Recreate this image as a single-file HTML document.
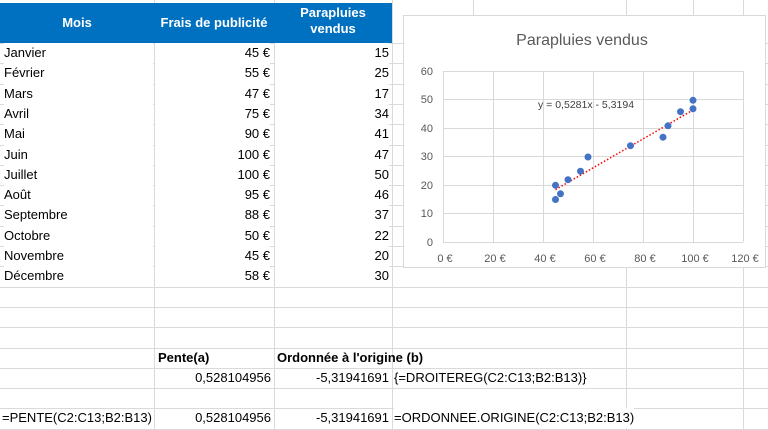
<!DOCTYPE html>
<html><head><meta charset="utf-8"><style>
body{margin:0;width:768px;height:429px;overflow:hidden;background:#fff;font-family:"Liberation Sans",sans-serif;font-size:13px;color:#000;position:relative}
.h{position:absolute;left:0;width:768px;height:1px;background:#dadada}
.v{position:absolute;top:0;width:1px;height:429px;background:#dadada}
.t{position:absolute;white-space:nowrap;line-height:20px}
.r{text-align:right}
.hd{position:absolute;left:0;top:3px;width:392px;height:40px;background:#0070c0}
.ht{position:absolute;color:#fff;font-weight:bold;text-align:center;line-height:16px}
</style></head><body>
<div id="g"></div>
<div class="hd"></div>
<div class="ht" style="left:0;width:154px;top:15px">Mois</div>
<div class="ht" style="left:154px;width:120px;top:15px">Frais de publicité</div>
<div class="ht" style="left:274px;width:118px;top:5px">Parapluies<br>vendus</div>
<div id="c"></div>
<svg style="position:absolute;left:0;top:0" width="768" height="429">
<rect x="403.5" y="15.5" width="362" height="252" fill="#fff" stroke="#d9d9d9"/>
<text x="582" y="45" font-family="Liberation Sans" font-size="16" fill="#595959" text-anchor="middle">Parapluies vendus</text>
<g stroke="#d9d9d9" stroke-width="1">
<line x1="443" y1="71.5" x2="743" y2="71.5"/><line x1="443" y1="99.5" x2="743" y2="99.5"/><line x1="443" y1="128.5" x2="743" y2="128.5"/><line x1="443" y1="156.5" x2="743" y2="156.5"/><line x1="443" y1="185.5" x2="743" y2="185.5"/><line x1="443" y1="213.5" x2="743" y2="213.5"/><line x1="443" y1="242.5" x2="743" y2="242.5"/>
<line x1="443.5" y1="71" x2="443.5" y2="242"/><line x1="493.5" y1="71" x2="493.5" y2="242"/><line x1="543.5" y1="71" x2="543.5" y2="242"/><line x1="593.5" y1="71" x2="593.5" y2="242"/><line x1="643.5" y1="71" x2="643.5" y2="242"/><line x1="693.5" y1="71" x2="693.5" y2="242"/><line x1="743.5" y1="71" x2="743.5" y2="242"/>
</g>
<g font-family="Liberation Sans" font-size="11" fill="#595959" text-anchor="end">
<text x="433" y="75">60</text><text x="433" y="103">50</text><text x="433" y="132">40</text><text x="433" y="160">30</text><text x="433" y="189">20</text><text x="433" y="217">10</text><text x="433" y="246">0</text>
</g>
<g font-family="Liberation Sans" font-size="11" fill="#595959" text-anchor="middle">
<text x="445" y="262">0 €</text><text x="495" y="262">20 €</text><text x="545" y="262">40 €</text><text x="595" y="262">60 €</text><text x="645" y="262">80 €</text><text x="695" y="262">100 €</text><text x="745" y="262">120 €</text>
</g>
<text x="538" y="108" font-family="Liberation Sans" font-size="10.5" fill="#404040">y = 0,5281x - 5,3194</text>
<line x1="555.5" y1="189.6" x2="693" y2="110" stroke="#ff0000" stroke-width="1.5" stroke-dasharray="1.5,2"/>
<g fill="#4472c4">
<circle cx="555.5" cy="199.5" r="3.5"/><circle cx="580.5" cy="171.2" r="3.5"/><circle cx="560.5" cy="193.8" r="3.5"/><circle cx="630.5" cy="145.7" r="3.5"/><circle cx="668" cy="125.8" r="3.5"/><circle cx="693" cy="108.8" r="3.5"/><circle cx="693" cy="100.3" r="3.5"/><circle cx="680.5" cy="111.7" r="3.5"/><circle cx="663" cy="137.2" r="3.5"/><circle cx="568" cy="179.7" r="3.5"/><circle cx="555.5" cy="185.3" r="3.5"/><circle cx="588" cy="157" r="3.5"/>
</g>
</svg>
<script>
var g=document.getElementById('g'),s='';
var ys=[43];for(var i=1;i<20;i++)ys.push(Math.round(43+20.3*i));
ys.forEach(function(y){s+='<div class="h" style="top:'+y+'px"></div>'});
[154,274,392,626,743].forEach(function(x){s+='<div class="v" style="left:'+x+'px"></div>'});
[473,693].forEach(function(x){s+='<div class="v" style="left:'+x+'px;height:20px"></div>'});
g.innerHTML=s;
var d=[["Janvier","45 €",15],["Février","55 €",25],["Mars","47 €",17],["Avril","75 €",34],["Mai","90 €",41],["Juin","100 €",47],["Juillet","100 €",50],["Août","95 €",46],["Septembre","88 €",37],["Octobre","50 €",22],["Novembre","45 €",20],["Décembre","58 €",30]];
var c='';
d.forEach(function(r,i){var y=43+20.3*i;
c+='<div class="t" style="left:4px;top:'+y+'px;background:#fff;width:149px">'+r[0]+'</div>';
c+='<div class="t r" style="left:155px;width:115px;top:'+y+'px;background:#fff">'+r[1]+'</div>';
c+='<div class="t r" style="left:275px;width:114px;top:'+y+'px;background:#fff">'+r[2]+'</div>';});
function Y(k){return 43+20.3*k}
c+='<div class="t" style="left:158px;top:'+Y(15)+'px;font-weight:bold">Pente(a)</div>';
c+='<div class="t" style="left:277px;top:'+Y(15)+'px;font-weight:bold">Ordonnée à l\'origine (b)</div>';
c+='<div class="t r" style="left:155px;width:116px;top:'+Y(16)+'px">0,528104956</div>';
c+='<div class="t r" style="left:275px;width:114px;top:'+Y(16)+'px">-5,31941691</div>';
c+='<div class="t" style="left:394px;top:'+Y(16)+'px">{=DROITEREG(C2:C13;B2:B13)}</div>';
c+='<div class="t" style="left:2px;top:'+Y(18)+'px">=PENTE(C2:C13;B2:B13)</div>';
c+='<div class="t r" style="left:155px;width:116px;top:'+Y(18)+'px">0,528104956</div>';
c+='<div class="t r" style="left:275px;width:114px;top:'+Y(18)+'px">-5,31941691</div>';
c+='<div class="t" style="left:394px;top:'+Y(18)+'px;background:#fff">=ORDONNEE.ORIGINE(C2:C13;B2:B13)</div>';
document.getElementById('c').innerHTML=c;
</script>
</body></html>
